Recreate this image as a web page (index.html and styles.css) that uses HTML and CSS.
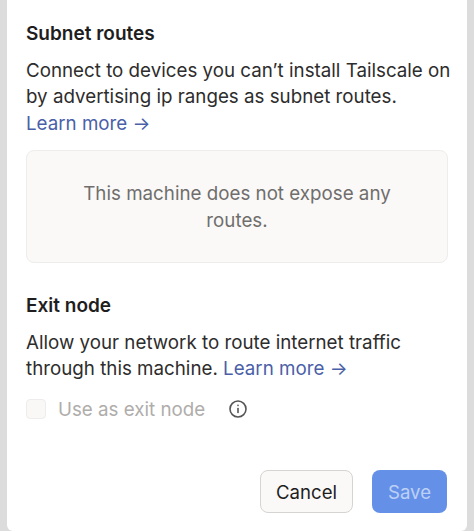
FILE: index.html
```html
<!DOCTYPE html>
<html lang="en">
<head>
    <meta charset="UTF-8">
    <meta name="viewport" content="width=device-width, initial-scale=1.0">
    <title>Machine settings</title>
    <link rel="stylesheet" href="styles.css">
</head>
<body>
    <div class="dialog">
        <section class="section">
            <h2 class="title">Subnet routes</h2>
            <p class="text">Connect to devices you can’t install Tailscale on by advertising ip ranges as subnet routes. <a class="link" href="#">Learn more →</a></p>
            <div class="empty">This machine does not expose any routes.</div>
        </section>
        <section class="section exit">
            <h2 class="title">Exit node</h2>
            <p class="text">Allow your network to route internet traffic through this machine. <a class="link" href="#">Learn more →</a></p>
            <div class="option">
                <span class="checkbox"></span>
                <span class="option-label">Use as exit node</span>
                <svg class="info" width="20" height="20" viewBox="0 0 20 20" fill="none" stroke="#555" stroke-width="1.6" stroke-linecap="round">
                    <circle cx="10" cy="10" r="8"></circle>
                    <path d="M10 9.5v4"></path>
                    <path d="M10 6.4v.1"></path>
                </svg>
            </div>
        </section>
        <div class="actions">
            <button class="btn cancel">Cancel</button>
            <button class="btn save">Save</button>
        </div>
    </div>
</body>
</html>
```

FILE: styles.css
```css
html, body {
    height: 100%;
}
body {
    margin: 0;
    background-color: #dcdcdc;
    font-family: Inter, "Liberation Sans", sans-serif;
    overflow: hidden;
}
.dialog {
    box-sizing: border-box;
    height: 531px;
    margin: 0 7px;
    padding: 21px 19px 0;
    background-color: #fff;
    border-radius: 0 0 6px 6px;
}
.title {
    margin: 0;
    font-size: 19px;
    line-height: 26px;
    font-weight: 600;
    color: #1f1e1e;
}
.text {
    margin: 10.5px -6px 0 0;
    font-size: 18.75px;
    line-height: 26.5px;
    color: #2e2d2d;
}
.link {
    color: #4b5fa8;
    text-decoration: none;
    white-space: nowrap;
}
.empty {
    box-sizing: border-box;
    height: 113px;
    margin-top: 13px;
    padding: 30px 50px 0;
    background-color: #faf9f8;
    border: 1px solid #eeedec;
    border-radius: 8px;
    font-size: 18.75px;
    line-height: 26.5px;
    color: #706e6c;
    text-align: center;
}
.exit {
    margin-top: 30px;
}
.option {
    display: flex;
    align-items: center;
    height: 26px;
    margin-top: 13.5px;
}
.checkbox {
    box-sizing: border-box;
    width: 20px;
    height: 20px;
    background-color: #f9f8f7;
    border: 1px solid #eeedec;
    border-radius: 4px;
}
.option-label {
    margin-left: 12px;
    font-size: 18.75px;
    color: #afadab;
}
.info {
    margin-left: 23px;
}
.actions {
    display: flex;
    justify-content: flex-end;
    gap: 19px;
    margin: 48px 1px 0 0;
}
.btn {
    height: 43px;
    border-radius: 8px;
    font-family: inherit;
    font-size: 18.6px;
    font-weight: 400;
}
.cancel {
    width: 93px;
    background-color: #faf9f8;
    border: 1px solid #d6d4d2;
    color: #1f1e1e;
}
.save {
    width: 75px;
    background-color: #6590e8;
    border: 0;
    color: #bcd0f6;
}
```
